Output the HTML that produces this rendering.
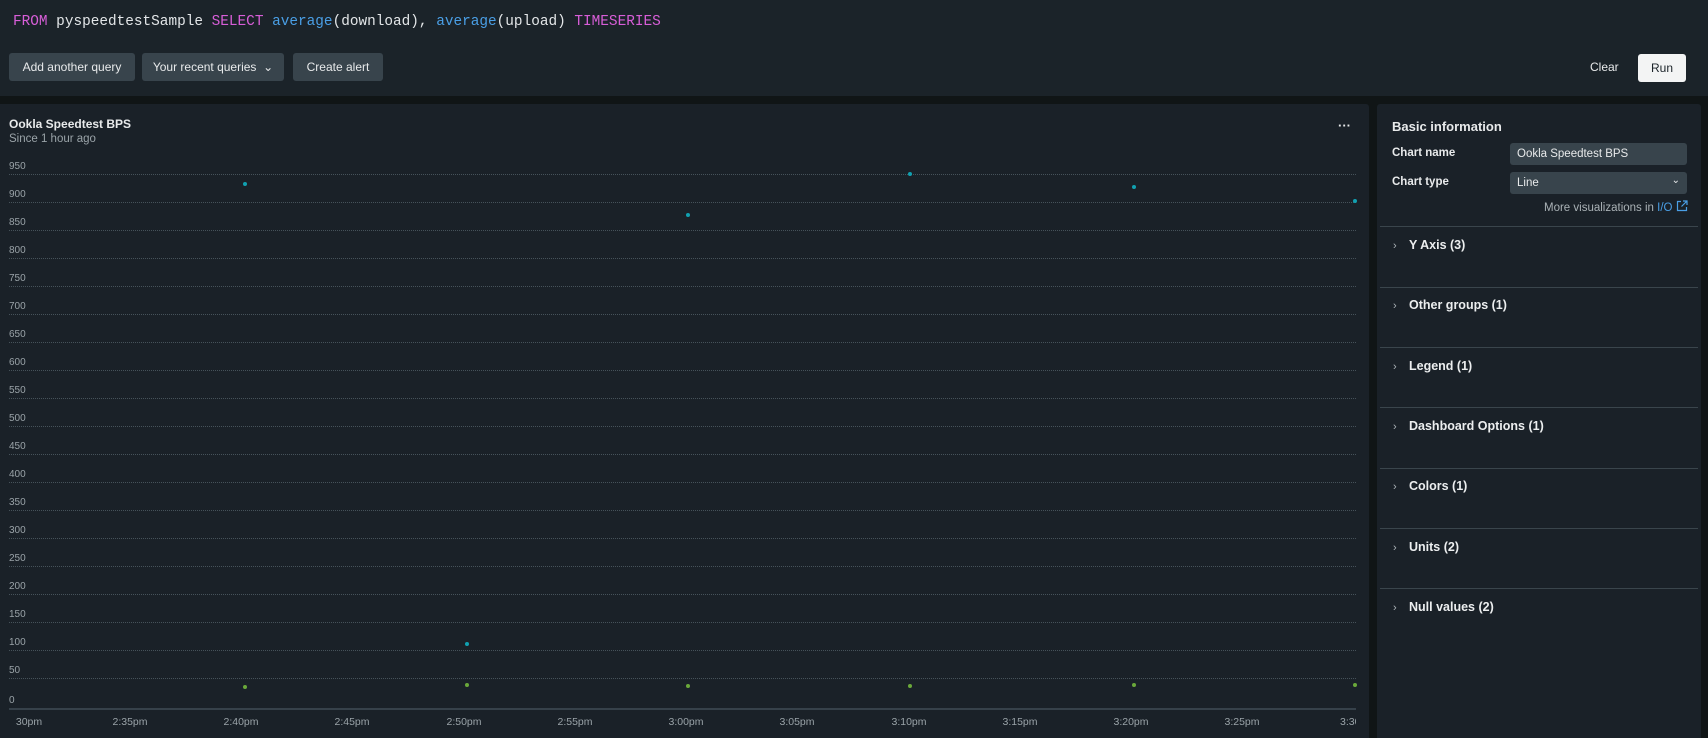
<!DOCTYPE html>
<html><head><meta charset="utf-8"><style>
*{margin:0;padding:0;box-sizing:border-box}
body{width:1708px;height:738px;background:#101516;font-family:"Liberation Sans",sans-serif;color:#e8eaeb;position:relative;overflow:hidden}
.top{position:absolute;left:0;top:0;width:1708px;height:96px;background:#1b2329}
.q{position:absolute;left:13px;top:14px;font-family:"Liberation Mono",monospace;font-size:14.4px;color:#e3e6e8;white-space:pre}
.k{color:#d85ed8}.f{color:#4a9fe6}
.btn{position:absolute;top:53px;height:28px;background:#38444c;border-radius:3px;font-size:12px;line-height:28px;text-align:center;color:#e8eaeb}
.chart{position:absolute;left:0;top:104px;width:1369px;height:634px;background:#1a2128;border-radius:0 3px 0 0}
.side{position:absolute;left:1377px;top:104px;width:324px;height:634px;background:#1a2128;border-radius:3px 3px 0 0}
.abs{position:absolute}
.yl{position:absolute;left:9px;font-size:10px;color:#9aa3a8}
.gl{position:absolute;left:9px;width:1347px;border-top:1px dotted #46525a}
.xl{position:absolute;top:716px;font-size:10.5px;color:#9aa3a8;transform:translateX(-50%)}
.pt{position:absolute;width:4px;height:4px;border-radius:2px}
.sec{position:absolute;left:1380px;width:318px;border-top:1px solid #3a454c}
.sl{position:absolute;left:1409px;font-size:12.5px;font-weight:bold;color:#eceeef}
.ch{position:absolute;left:1393px;font-size:11px;color:#aab2b6}
</style></head><body>
<div class="top"></div>
<div class="q"><span class="k">FROM</span> pyspeedtestSample <span class="k">SELECT</span> <span class="f">average</span>(download), <span class="f">average</span>(upload) <span class="k">TIMESERIES</span></div>
<div class="btn" style="left:9px;width:126px">Add another query</div>
<div class="btn" style="left:142px;width:142px">Your recent queries &nbsp;⌄</div>
<div class="btn" style="left:293px;width:90px">Create alert</div>
<div class="abs" style="left:1590px;top:60px;font-size:12px">Clear</div>
<div class="btn" style="left:1638px;top:54px;width:48px;background:#f3f4f4;color:#1b2329">Run</div>

<div class="chart"></div>
<div class="abs" style="left:9px;top:117px;font-size:12px;font-weight:bold">Ookla Speedtest BPS</div>
<div class="abs" style="left:9px;top:133px;font-size:11.5px;color:#9aa3a8">Since 1 hour ago</div>
<div class="abs" style="left:1338px;top:118px;font-size:13px;font-weight:bold">···</div>

<div class="yl" style="top:161px">950</div><div class="gl" style="top:174px"></div>
<div class="yl" style="top:189px">900</div><div class="gl" style="top:202px"></div>
<div class="yl" style="top:217px">850</div><div class="gl" style="top:230px"></div>
<div class="yl" style="top:245px">800</div><div class="gl" style="top:258px"></div>
<div class="yl" style="top:273px">750</div><div class="gl" style="top:286px"></div>
<div class="yl" style="top:301px">700</div><div class="gl" style="top:314px"></div>
<div class="yl" style="top:329px">650</div><div class="gl" style="top:342px"></div>
<div class="yl" style="top:357px">600</div><div class="gl" style="top:370px"></div>
<div class="yl" style="top:385px">550</div><div class="gl" style="top:398px"></div>
<div class="yl" style="top:413px">500</div><div class="gl" style="top:426px"></div>
<div class="yl" style="top:441px">450</div><div class="gl" style="top:454px"></div>
<div class="yl" style="top:469px">400</div><div class="gl" style="top:482px"></div>
<div class="yl" style="top:497px">350</div><div class="gl" style="top:510px"></div>
<div class="yl" style="top:525px">300</div><div class="gl" style="top:538px"></div>
<div class="yl" style="top:553px">250</div><div class="gl" style="top:566px"></div>
<div class="yl" style="top:581px">200</div><div class="gl" style="top:594px"></div>
<div class="yl" style="top:609px">150</div><div class="gl" style="top:622px"></div>
<div class="yl" style="top:637px">100</div><div class="gl" style="top:650px"></div>
<div class="yl" style="top:665px">50</div><div class="gl" style="top:678px"></div>
<div class="yl" style="top:695px">0</div>
<div class="abs" style="left:9px;top:708px;width:1347px;height:2px;background:#36414a"></div>

<div class="xl" style="left:29px">30pm</div>
<div class="xl" style="left:130px">2:35pm</div>
<div class="xl" style="left:241px">2:40pm</div>
<div class="xl" style="left:352px">2:45pm</div>
<div class="xl" style="left:464px">2:50pm</div>
<div class="xl" style="left:575px">2:55pm</div>
<div class="xl" style="left:686px">3:00pm</div>
<div class="xl" style="left:797px">3:05pm</div>
<div class="xl" style="left:909px">3:10pm</div>
<div class="xl" style="left:1020px">3:15pm</div>
<div class="xl" style="left:1131px">3:20pm</div>
<div class="xl" style="left:1242px">3:25pm</div>
<div class="abs" style="left:1340px;top:716px;width:16px;overflow:hidden;font-size:10.5px;color:#9aa3a8;white-space:nowrap">3:30pm</div>

<div class="pt" style="left:243px;top:182px;background:#11a0b0"></div>
<div class="pt" style="left:465px;top:642px;background:#11a0b0"></div>
<div class="pt" style="left:686px;top:213px;background:#11a0b0"></div>
<div class="pt" style="left:908px;top:172px;background:#11a0b0"></div>
<div class="pt" style="left:1132px;top:185px;background:#11a0b0"></div>
<div class="pt" style="left:1353px;top:199px;background:#11a0b0"></div>
<div class="pt" style="left:243px;top:685px;background:#6aa83a"></div>
<div class="pt" style="left:465px;top:683px;background:#6aa83a"></div>
<div class="pt" style="left:686px;top:684px;background:#6aa83a"></div>
<div class="pt" style="left:908px;top:684px;background:#6aa83a"></div>
<div class="pt" style="left:1132px;top:683px;background:#6aa83a"></div>
<div class="pt" style="left:1353px;top:683px;background:#6aa83a"></div>

<div class="side"></div>
<div class="abs" style="left:1392px;top:119px;font-size:13px;font-weight:bold">Basic information</div>
<div class="abs" style="left:1392px;top:147px;font-size:11.5px;font-weight:bold">Chart name</div>
<div class="abs" style="left:1510px;top:143px;width:177px;height:22px;background:#38444c;border-radius:3px;font-size:11.5px;line-height:22px;padding-left:7px">Ookla Speedtest BPS</div>
<div class="abs" style="left:1392px;top:176px;font-size:11.5px;font-weight:bold">Chart type</div>
<div class="abs" style="left:1510px;top:172px;width:177px;height:22px;background:#38444c;border-radius:3px;font-size:11.5px;line-height:22px;padding-left:7px">Line<span style="position:absolute;right:7px;top:-2px;font-size:10px">⌄</span></div>
<div class="abs" style="left:1544px;top:200px;font-size:11.5px;color:#aab2b6">More visualizations in <span style="color:#4a9fe6">I/O</span> <svg width="12" height="12" viewBox="0 0 12 12" style="vertical-align:-1px"><path d="M5 1.5H1.5v9h9V7M7 1h4v4M11 1 5.5 6.5" fill="none" stroke="#4a9fe6" stroke-width="1.2"/></svg></div>

<div class="sec" style="top:226px"></div><div class="ch" style="top:240px">›</div><div class="sl" style="top:238px">Y Axis (3)</div>
<div class="sec" style="top:287px"></div><div class="ch" style="top:300px">›</div><div class="sl" style="top:298px">Other groups (1)</div>
<div class="sec" style="top:347px"></div><div class="ch" style="top:361px">›</div><div class="sl" style="top:359px">Legend (1)</div>
<div class="sec" style="top:407px"></div><div class="ch" style="top:421px">›</div><div class="sl" style="top:419px">Dashboard Options (1)</div>
<div class="sec" style="top:468px"></div><div class="ch" style="top:481px">›</div><div class="sl" style="top:479px">Colors (1)</div>
<div class="sec" style="top:528px"></div><div class="ch" style="top:542px">›</div><div class="sl" style="top:540px">Units (2)</div>
<div class="sec" style="top:588px"></div><div class="ch" style="top:602px">›</div><div class="sl" style="top:600px">Null values (2)</div>
</body></html>
